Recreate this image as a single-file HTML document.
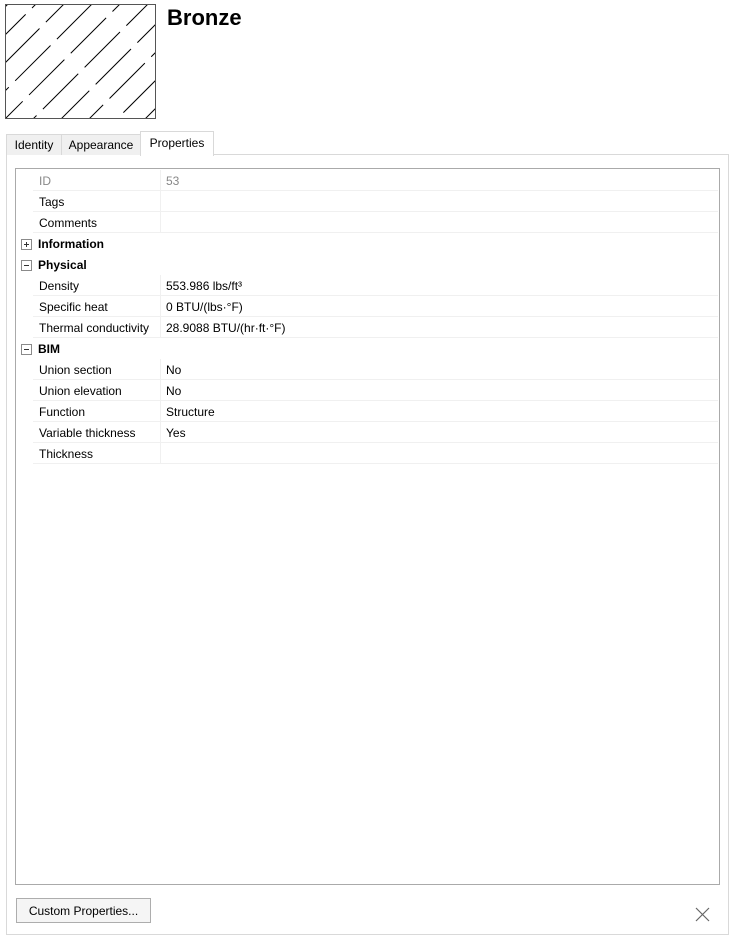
<!DOCTYPE html>
<html><head><style>
body{margin:0;width:735px;height:940px;background:#fff;font-family:"Liberation Sans",sans-serif;font-size:12px;color:#000;position:relative;overflow:hidden}
.abs{position:absolute}
.tab{position:absolute;top:134px;height:20px;border:1px solid #d9d9d9;border-bottom:none;background:#f0f0f0;line-height:21px;text-align:center;font-size:12px}
.row{position:absolute;left:33px;width:685px;height:20px;border-bottom:1px solid #f0f0f0;line-height:22px}
.row .n{position:absolute;left:6px}
.row .v{position:absolute;left:133px}
.row .sep{position:absolute;left:127px;top:0;width:1px;height:21px;background:#f0f0f0}
.cat{position:absolute;left:16px;width:702px;height:21px;line-height:22px;font-weight:bold}
.box{position:absolute;left:5px;width:9px;height:9px;top:6px;border:1px solid #8a8a8a;background:#fff}
.box:before{content:"";position:absolute;left:2px;top:4px;width:5px;height:1px;background:#333}
.plus:after{content:"";position:absolute;left:4px;top:2px;width:1px;height:5px;background:#333}
</style></head><body>
<svg class="abs" style="left:5px;top:4px" width="151" height="115">
<defs><clipPath id="c"><rect x="1" y="1" width="149" height="113"/></clipPath></defs>
<g clip-path="url(#c)" stroke="#000" stroke-width="1" stroke-dasharray="50 9">
<line x1="-112" y1="115" x2="3" y2="0"/>
<line x1="-84" y1="115" x2="31" y2="0" stroke-dashoffset="20"/>
<line x1="-56" y1="115" x2="59" y2="0" stroke-dashoffset="40"/>
<line x1="-28" y1="115" x2="87" y2="0" stroke-dashoffset="5"/>
<line x1="0" y1="115" x2="115" y2="0" stroke-dashoffset="25"/>
<line x1="28" y1="115" x2="143" y2="0" stroke-dashoffset="45"/>
<line x1="56" y1="115" x2="171" y2="0" stroke-dashoffset="10"/>
<line x1="84" y1="115" x2="199" y2="0" stroke-dashoffset="30"/>
<line x1="112" y1="115" x2="227" y2="0" stroke-dashoffset="50"/>
<line x1="140" y1="115" x2="255" y2="0" stroke-dashoffset="15"/>
</g>
<rect x="0.5" y="0.5" width="150" height="114" fill="none" stroke="#555"/>
</svg>
<div class="abs" style="left:167px;top:5px;font-size:22px;font-weight:bold">Bronze</div>
<div class="abs" style="left:6px;top:154px;width:721px;height:779px;border:1px solid #d9d9d9"></div>
<div class="tab" style="left:6px;width:54px">Identity</div>
<div class="tab" style="left:61px;width:78px">Appearance</div>
<div class="tab" style="left:140px;top:131px;height:24px;width:72px;background:#fff;line-height:22px">Properties</div>
<div class="abs" style="left:15px;top:168px;width:703px;height:715px;border:1px solid #aaa;background:#fff"></div>
<div class="row" style="top:170px;color:#888"><span class="n">ID</span><span class="sep"></span><span class="v">53</span></div>
<div class="row" style="top:191px"><span class="n">Tags</span><span class="sep"></span></div>
<div class="row" style="top:212px"><span class="n">Comments</span><span class="sep"></span></div>
<div class="cat" style="top:233px"><span class="box plus"></span><span style="position:absolute;left:22px">Information</span></div>
<div class="cat" style="top:254px"><span class="box"></span><span style="position:absolute;left:22px">Physical</span></div>
<div class="row" style="top:275px"><span class="n">Density</span><span class="sep"></span><span class="v">553.986 lbs/ft³</span></div>
<div class="row" style="top:296px"><span class="n">Specific heat</span><span class="sep"></span><span class="v">0 BTU/(lbs·°F)</span></div>
<div class="row" style="top:317px"><span class="n">Thermal conductivity</span><span class="sep"></span><span class="v">28.9088 BTU/(hr·ft·°F)</span></div>
<div class="cat" style="top:338px"><span class="box"></span><span style="position:absolute;left:22px">BIM</span></div>
<div class="row" style="top:359px"><span class="n">Union section</span><span class="sep"></span><span class="v">No</span></div>
<div class="row" style="top:380px"><span class="n">Union elevation</span><span class="sep"></span><span class="v">No</span></div>
<div class="row" style="top:401px"><span class="n">Function</span><span class="sep"></span><span class="v">Structure</span></div>
<div class="row" style="top:422px"><span class="n">Variable thickness</span><span class="sep"></span><span class="v">Yes</span></div>
<div class="row" style="top:443px"><span class="n">Thickness</span><span class="sep"></span></div>
<div class="abs" style="left:16px;top:898px;width:133px;height:23px;border:1px solid #adadad;background:#f5f5f5;line-height:25px;text-align:center">Custom Properties...</div>
<svg class="abs" style="left:695px;top:907px" width="15" height="15"><path d="M1 1L14 14M14 1L1 14" stroke="#666" stroke-width="1.2"/></svg>
</body></html>
